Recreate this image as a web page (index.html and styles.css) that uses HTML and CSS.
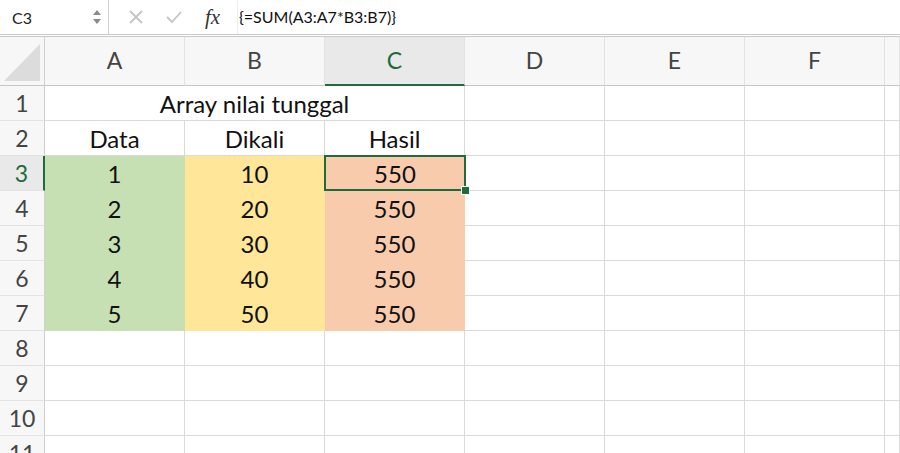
FILE: index.html
```html
<!DOCTYPE html>
<html lang="en">
<head>
<meta charset="UTF-8" />
<title>Array nilai tunggal</title>
<link rel="stylesheet" href="styles.css">
</head>
<body>
<div class="formula-bar">
  <div class="name-box">
    <span>C3</span>
    <svg class="spin" width="10" height="18" viewBox="0 0 10 18">
      <polygon points="5,2 9,7 1,7" fill="#8a8a8a"/>
      <polygon points="1,11 9,11 5,16" fill="#8a8a8a"/>
    </svg>
  </div>
  <div class="tools">
    <svg width="16" height="16" viewBox="0 0 16 16"><path d="M2 2 L14 14 M14 2 L2 14" stroke="#c4c4c4" stroke-width="1.8"/></svg>
    <svg width="18" height="16" viewBox="0 0 18 16"><path d="M2 8 L7 13 L16 3" stroke="#c4c4c4" stroke-width="1.8" fill="none"/></svg>
    <span class="fx">fx</span>
  </div>
  <div class="formula">{=SUM(A3:A7*B3:B7)}</div>
</div>

<div class="sheet">
  <div class="corner"><svg width="45" height="48" viewBox="0 0 45 48"><polygon points="40,7 40,44 4,44" fill="#dcdcdc"/></svg></div>
  <div class="col">A</div>
  <div class="col">B</div>
  <div class="col active">C</div>
  <div class="col">D</div>
  <div class="col">E</div>
  <div class="col">F</div>
  <div class="col"></div>

  <div class="row-h">1</div>
  <div class="cell merged">Array nilai tunggal</div>
  <div class="cell"></div><div class="cell"></div><div class="cell"></div><div class="cell"></div>

  <div class="row-h">2</div>
  <div class="cell">Data</div><div class="cell">Dikali</div><div class="cell">Hasil</div>
  <div class="cell"></div><div class="cell"></div><div class="cell"></div><div class="cell"></div>

  <div class="row-h active">3</div>
  <div class="cell green">1</div><div class="cell yellow">10</div><div class="cell orange selected">550</div>
  <div class="cell"></div><div class="cell"></div><div class="cell"></div><div class="cell"></div>

  <div class="row-h">4</div>
  <div class="cell green">2</div><div class="cell yellow">20</div><div class="cell orange">550</div>
  <div class="cell"></div><div class="cell"></div><div class="cell"></div><div class="cell"></div>

  <div class="row-h">5</div>
  <div class="cell green">3</div><div class="cell yellow">30</div><div class="cell orange">550</div>
  <div class="cell"></div><div class="cell"></div><div class="cell"></div><div class="cell"></div>

  <div class="row-h">6</div>
  <div class="cell green">4</div><div class="cell yellow">40</div><div class="cell orange">550</div>
  <div class="cell"></div><div class="cell"></div><div class="cell"></div><div class="cell"></div>

  <div class="row-h">7</div>
  <div class="cell green">5</div><div class="cell yellow">50</div><div class="cell orange">550</div>
  <div class="cell"></div><div class="cell"></div><div class="cell"></div><div class="cell"></div>

  <div class="row-h">8</div>
  <div class="cell"></div><div class="cell"></div><div class="cell"></div>
  <div class="cell"></div><div class="cell"></div><div class="cell"></div><div class="cell"></div>

  <div class="row-h">9</div>
  <div class="cell"></div><div class="cell"></div><div class="cell"></div>
  <div class="cell"></div><div class="cell"></div><div class="cell"></div><div class="cell"></div>

  <div class="row-h">10</div>
  <div class="cell"></div><div class="cell"></div><div class="cell"></div>
  <div class="cell"></div><div class="cell"></div><div class="cell"></div><div class="cell"></div>

  <div class="row-h">11</div>
  <div class="cell"></div><div class="cell"></div><div class="cell"></div>
  <div class="cell"></div><div class="cell"></div><div class="cell"></div><div class="cell"></div>
</div>
</body>
</html>
```

FILE: styles.css
```css
* {
  box-sizing: border-box;
}
body {
  margin: 0;
  background: #fff;
  font-family: Lato, "Open Sans", sans-serif;
  color: #111;
  overflow: hidden;
  height: 453px;
}
.formula-bar {
  display: flex;
  align-items: center;
  height: 35px;
  border-bottom: 1px solid #c9c9c9;
  background: #fff;
}
.name-box {
  display: flex;
  align-items: center;
  justify-content: space-between;
  width: 109px;
  height: 34px;
  padding: 0 6px 0 12px;
  border-right: 1px solid #d4d4d4;
  font-size: 16px;
  color: #222;
}
.tools {
  display: flex;
  align-items: center;
  gap: 21px;
  padding-left: 19px;
  width: 128px;
  height: 34px;
}
.fx {
  font-family: "Liberation Serif", serif;
  font-style: italic;
  font-size: 21px;
  color: #333;
  margin-left: 1px;
}
.formula {
  font-size: 16px;
  color: #111;
  padding-left: 1px;
  border-left: 1px solid #ececec;
  height: 34px;
  line-height: 34px;
}
.sheet {
  display: grid;
  grid-template-columns: 45px repeat(6, 140px) 1fr;
  grid-template-rows: 49px repeat(11, 35px);
  border-top: 1px solid #c9c9c9;
  margin-top: 1px;
}
.corner {
  background: #f7f7f7;
  border-right: 1px solid #d0d0d0;
  border-bottom: 1px solid #c6c6c6;
}
.corner svg {
  display: block;
}
.col {
  display: flex;
  align-items: center;
  justify-content: center;
  background: #f7f7f7;
  border-right: 1px solid #e2e2e2;
  border-bottom: 1px solid #c6c6c6;
  font-size: 23px;
  color: #444;
  padding-bottom: 2px;
}
.col.active {
  background: #e9e9e9;
  color: #1e6b3c;
  border-bottom: 2px solid #1e6b3c;
}
.row-h {
  display: flex;
  align-items: center;
  justify-content: center;
  background: #f7f7f7;
  border-right: 1px solid #d0d0d0;
  border-bottom: 1px solid #e2e2e2;
  font-size: 23px;
  color: #444;
}
.row-h.active {
  background: #e9e9e9;
  color: #1e6b3c;
  border-right: 2px solid #1e6b3c;
}
.cell {
  display: flex;
  align-items: center;
  justify-content: center;
  border-right: 1px solid #dadada;
  border-bottom: 1px solid #dadada;
  font-size: 24px;
  color: #111;
}
.merged {
  grid-column: span 3;
}
.green {
  background: #c6e0b4;
  border-color: #c6e0b4;
}
.yellow {
  background: #ffe699;
  border-color: #ffe699;
}
.orange {
  background: #f8cbad;
  border-color: #f8cbad;
}
.selected {
  position: relative;
  box-shadow: inset 0 0 0 2px #1e6b3c;
  margin: -1px -1px 0 -1px;
  border: 0;
}
.selected::after {
  content: "";
  position: absolute;
  right: -4px;
  bottom: -4px;
  width: 7px;
  height: 7px;
  background: #1e6b3c;
  border: 1px solid #fff;
}
```
